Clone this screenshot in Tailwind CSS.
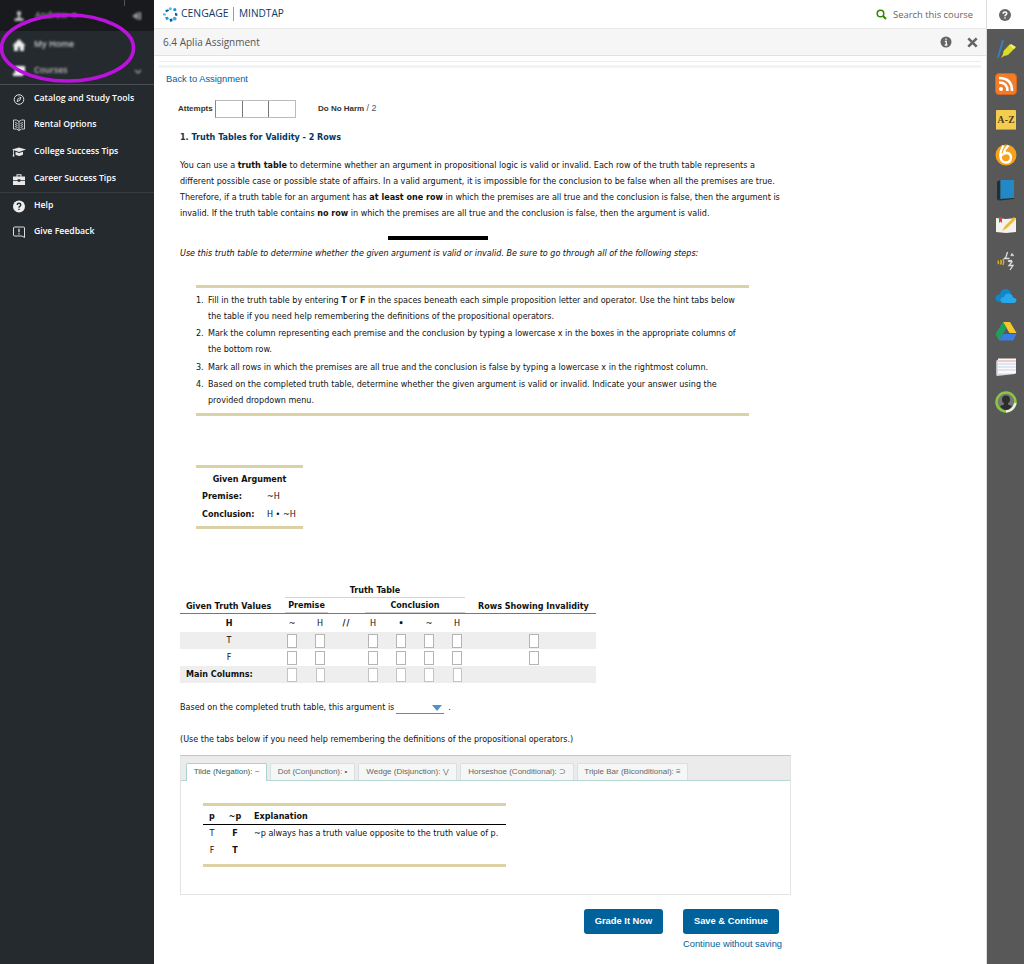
<!DOCTYPE html>
<html lang="en"><head><meta charset="utf-8"><title>6.4 Aplia Assignment</title>
<script src="https://cdn.jsdelivr.net/npm/@tailwindcss/browser@4"></script></head>
<body class="bg-white">
<div class="relative flex h-[964px] w-[1024px] overflow-hidden whitespace-nowrap">

<!-- Sidebar -->
<nav class="flex w-[154px] flex-none flex-col bg-[#252a2e] font-['Open_Sans',sans-serif] text-[8.7px] font-semibold text-white">
  <div class="flex h-[31px] items-center bg-[#181a1e] pt-px text-[#999]">
    <svg class="ml-[13px] h-3 w-3 blur-[1px]" viewBox="0 0 12 12" fill="#bbb"><circle cx="6" cy="3.200" r="2.200"/><path d="M5 5h2v2.500l3.500 1.200V11h-9V8.700L5 7.500z"/></svg>
    <span class="ml-[10px] w-[87px] blur-[1.200px]">Andrew &nbsp;▾</span>
    <svg class="ml-[10px] h-[10px] w-[10px] blur-[1px]" viewBox="0 0 10 10" fill="#999"><path d="M0 5l6-4v8zM7 1h2v8H7z"/></svg>
  </div>
  <div class="flex h-[27px] items-center">
    <svg class="ml-[13px] h-3 w-3 blur-[0.800px]" viewBox="0 0 12 12" fill="#eee"><path d="M6 0L12 6v1h-1v5H7V8H5v4H1V7H0V6z"/></svg>
    <span class="ml-[9px] text-[#ccc] blur-[0.900px]">My Home</span>
  </div>
  <div class="flex h-[27px] items-center border-b border-[#4b4f53]">
    <svg class="ml-[13px] h-3 w-3 blur-[0.800px]" viewBox="0 0 12 12" fill="#eee"><path d="M2 1h10v8H2zM0 8h10v3H0z"/></svg>
    <span class="ml-[9px] w-[100px] text-[#bbb] blur-[0.900px]">Courses</span>
    <svg class="h-[5px] w-[8px] blur-[0.800px]" viewBox="0 0 8 5" fill="none" stroke="#999" stroke-width="1.500"><path d="M1 1l3 3 3-3"/></svg>
  </div>
  <div class="flex h-[27px] items-center">
    <svg class="ml-[12px] h-[14px] w-[14px]" viewBox="0 0 14 14" fill="none" stroke="#e2e2e2"><circle cx="7" cy="7.500" r="4.800"/><path d="M9 5.300L6.200 6.600 5 9.600l2.800-1.300zM7 4.500v-.8" stroke-width=".9"/></svg>
    <span class="ml-[8px]">Catalog and Study Tools</span>
  </div>
  <div class="flex h-[26px] items-center">
    <svg class="ml-[12px] h-[14px] w-[14px]" viewBox="0 0 14 14" fill="none" stroke="#ddd" stroke-width=".9"><path d="M7 3.500L4.500 2H1.500v9h3L7 12.500 9.500 11h3V2h-3zM7 3.500v9M3 4.500l2.500 1M3 6.500l2.500 1M3 8.500l2.500 1M11 4.500l-2.500 1M11 6.500l-2.500 1M11 8.500l-2.500 1"/></svg>
    <span class="ml-[8px]">Rental Options</span>
  </div>
  <div class="flex h-[27px] items-center">
    <svg class="ml-[12px] h-[14px] w-[14px]" viewBox="0 0 14 14" fill="#e8e8e8"><path d="M7 2.500l7 2-7 2.400-5-1.600V9l.6 2.500H.5L1.200 9V5L0 4.500zM3.500 6.800L7 8l4-1.200v3Q7 12 3.500 9.800z"/></svg>
    <span class="ml-[8px]">College Success Tips</span>
  </div>
  <div class="flex h-[27px] items-center">
    <svg class="ml-[12px] h-[14px] w-[14px]" viewBox="0 0 14 14" fill="#e8e8e8"><path d="M1 4.500h3.500V2.300h5v2.200H13V8H8.300V7.300H5.700V8H1zM5.500 4.500h3V3.300h-3zM1 8.800h4.700v1h2.600v-1H13V13H1z" fill-rule="evenodd"/></svg>
    <span class="ml-[8px]">Career Success Tips</span>
  </div>
  <div class="flex h-[27px] items-center border-t border-[#383c40]">
    <svg class="ml-[12px] h-[14px] w-[14px]" viewBox="0 0 14 14"><circle cx="7" cy="7.500" r="6" fill="#eee"/><path d="M5.200 6Q5.200 4.300 7 4.300T8.800 6Q8.800 6.700 7.800 7.300 7 7.800 7 8.700M7 9.700v1.200" fill="none" stroke="#252a2e" stroke-width="1.400"/></svg>
    <span class="ml-[8px]">Help</span>
  </div>
  <div class="flex h-[26px] items-center">
    <svg class="ml-[12px] h-[14px] w-[14px]" viewBox="0 0 14 14" fill="none" stroke="#ddd"><path d="M2.500 2h9q1 0 1 1v9.500L10 11H2.500q-1 0-1-1V3q0-1 1-1z"/><path d="M7 3.800v3.500M7 8.300v1.300" stroke-width="1.300"/></svg>
    <span class="ml-[8px]">Give Feedback</span>
  </div>
</nav>

<!-- Main column -->
<main class="flex w-[833px] flex-none flex-col border-r border-[#ddd]">
  <header class="flex h-[29px] flex-none items-center border-b border-[#e8e8e8] pl-[9px] font-['Open_Sans',sans-serif]">
    <svg class="h-[15px] w-[15px]" viewBox="0 0 15 15"><circle cx="7.300" cy="1.700" r="1.500" fill="#53bfe8"/><circle cx="11.800" cy="2.700" r="1.600" fill="#1a9ad7"/><path d="M2.300 3.200l2.800-.9 1 1.400-3 1.600zM12 5.700l2.300.7v2.500L12 8.500z" fill="#0b5a8e"/><path d="M0 6.300l3 .4-.4 2L0 8.300z" fill="#53bfe8"/><path d="M2 10.200l2.800-.5 1.200 2-2.500 1.500z" fill="#1a9ad7"/><path d="M6.500 12l2.600-.4.500 2.600-2.600.5z" fill="#0b5a8e"/><circle cx="11.700" cy="11.700" r="1.900" fill="#35b0e5"/></svg>
    <span class="ml-[3px] w-[48px] text-[10.400px] text-[#0c3a66]">CENGAGE</span>
    <span class="ml-[4px] h-[14px] w-px bg-[#8ba0b3]"></span>
    <span class="ml-[5px] text-[10.100px] text-[#0c3a66]">MINDTAP</span>
    <svg class="ml-auto h-[11px] w-[11px]" viewBox="0 0 11 11" fill="none" stroke="#358600"><circle cx="4.500" cy="4.500" r="3.300" stroke-width="1.500"/><path d="M7 7l3 3" stroke-width="2"/></svg>
    <span class="mr-[13px] ml-[6px] pt-[2px] text-[9.400px] text-[#666]">Search this course</span>
  </header>
  <div class="flex h-[27px] flex-none items-center border-b border-[#e2e2e2] bg-[#f6f6f6] pl-[9px] font-['Open_Sans',sans-serif] text-[10px] text-[#555]">
    <span>6.4 Aplia Assignment</span>
    <svg class="ml-auto h-[12px] w-[12px]" viewBox="0 0 12 12"><circle cx="6" cy="6" r="5.500" fill="#666"/><path d="M6 2.500v1.600M4.800 5.400h1.500v3.200M4.700 9h2.800" fill="none" stroke="#f6f6f6" stroke-width="1.300"/></svg>
    <svg class="mr-[8px] ml-[15px] h-[11px] w-[11px]" viewBox="0 0 11 11" stroke="#666" stroke-width="2.600"><path d="M1.300 1.300l8.400 8.400M9.700 1.300l-8.400 8.400"/></svg>
  </div>
  <div class="mt-[5px] mr-[5px] ml-[5px] h-px flex-none bg-[#ececec]"></div>
  <div class="mt-[3px] mr-[5px] ml-[5px] h-[3px] flex-none bg-[#f1f4f4]"></div>

  <div class="flex flex-none flex-col pl-[26px] font-['DejaVu_Sans',Verdana,sans-serif] text-[8.050px] text-[#111]">
    <a class="-ml-[14px] mt-[4px] h-[14px] font-['Liberation_Sans',Arial,sans-serif] text-[9.330px] leading-[14px] text-[#00629b]">Back to Assignment</a>
    <div class="mt-[14px] flex h-[18px] items-center font-['Liberation_Sans',Arial,sans-serif] text-[8px] text-[#333]">
      <b class="-ml-[2px] w-[37px] pb-px">Attempts</b>
      <div class="flex h-[18px] w-[81px] divide-x divide-[#777] border border-[#bbb] border-l-[#888]"><span class="w-[27px]"></span><span class="w-[26px]"></span><span class="w-[26px]"></span></div>
      <span class="ml-[22px] pb-px"><b>Do No Harm</b> <span class="text-[9px] text-[#555]">/ 2</span></span>
    </div>
    <h1 class="mt-[12px] h-[16px] font-bold leading-[16px] text-[#003865]">1. Truth Tables for Validity - 2 Rows</h1>
    <p class="mt-[12px] leading-[16px]">You can use a <b>truth table</b> to determine whether an argument in propositional logic is valid or invalid. Each row of the truth table represents a<br>different possible case or possible state of affairs. In a valid argument, it is impossible for the conclusion to be false when all the premises are true.<br>Therefore, if a truth table for an argument has <b>at least one row</b> in which the premises are all true and the conclusion is false, then the argument is<br>invalid. If the truth table contains <b>no row</b> in which the premises are all true and the conclusion is false, then the argument is valid.</p>
    <div class="mt-[14px] ml-[208px] h-[4px] w-[100px] bg-black"></div>
    <p class="mt-[6px] leading-[16px] italic">Use this truth table to determine whether the given argument is valid or invalid. Be sure to go through all of the following steps:</p>

    <ol class="mt-[23px] ml-[16px] h-[131px] w-[553px] border-y-[3px] border-[#dcd1a4] pt-[5px] leading-[16px]">
      <li class="flex h-[33px]"><span class="w-[12px]">1.</span><span>Fill in the truth table by entering <b>T</b> or <b>F</b> in the spaces beneath each simple proposition letter and operator. Use the hint tabs below<br>the table if you need help remembering the definitions of the propositional operators.</span></li>
      <li class="flex h-[34px]"><span class="w-[12px]">2.</span><span class="tracking-[-0.008px]">Mark the column representing each premise and the conclusion by typing a lowercase x in the boxes in the appropriate columns of<br>the bottom row.</span></li>
      <li class="flex h-[17px]"><span class="w-[12px]">3.</span><span>Mark all rows in which the premises are all true and the conclusion is false by typing a lowercase x in the rightmost column.</span></li>
      <li class="flex"><span class="w-[12px]">4.</span><span>Based on the completed truth table, determine whether the given argument is valid or invalid. Indicate your answer using the<br>provided dropdown menu.</span></li>
    </ol>

    <div class="mt-[49px] ml-[16px] h-[64px] w-[107px] border-y-[3px] border-[#dcd1a4] pt-[3px] leading-[17px]">
      <div class="text-center font-bold h-[17px]">Given Argument</div>
      <div class="flex pl-[6px]"><b class="w-[65px]">Premise:</b><span>~H</span></div>
      <div class="flex pl-[6px] pt-px"><b class="w-[65px]">Conclusion:</b><span>H • ~H</span></div>
    </div>

    <!-- Truth table -->
    <div class="mt-[53px] w-[416px] leading-[14px]">
      <div class="ml-[105px] h-[16px] w-[180px] border-b border-[#d4d4d4] pt-[2px] text-center font-bold leading-[13px]">Truth Table</div>
      <div class="flex h-[16px] border-b border-[#777] font-bold">
        <span class="w-[105px] pt-[2px] pl-[6px]">Given Truth Values</span>
        <span class="h-[15px] w-[43px] border-b border-[#ccc] pt-px text-center">Premise</span>
        <span class="ml-[37px] h-[15px] w-[100px] border-b border-[#ccc] pt-px text-center">Conclusion</span>
        <span class="ml-[13px] pt-[2px]">Rows Showing Invalidity</span>
      </div>
      <div class="grid h-[18px] grid-cols-[98px_28px_28px_25px_28px_28px_28px_28px_125px] items-center pt-[2px] text-center">
        <b>H</b><span>~</span><span>H</span><b class="tracking-[1px]">//</b><span>H</span><b>•</b><span>~</span><span>H</span><span></span>
      </div>
      <div class="grid h-[17px] grid-cols-[98px_28px_28px_25px_28px_28px_28px_28px_125px] items-center justify-items-center bg-[#eee]">
        <span>T</span><i class="h-[14px] w-[10px] border border-[#b4b4b4] bg-white"></i><i class="h-[14px] w-[10px] border border-[#b4b4b4] bg-white"></i><span></span><i class="h-[14px] w-[10px] border border-[#b4b4b4] bg-white"></i><i class="h-[14px] w-[10px] border border-[#b4b4b4] bg-white"></i><i class="h-[14px] w-[10px] border border-[#b4b4b4] bg-white"></i><i class="h-[14px] w-[10px] border border-[#b4b4b4] bg-white"></i><i class="h-[14px] w-[10px] border border-[#b4b4b4] bg-white"></i>
      </div>
      <div class="grid h-[17px] grid-cols-[98px_28px_28px_25px_28px_28px_28px_28px_125px] items-center justify-items-center">
        <span class="pt-px">F</span><i class="h-[14px] w-[10px] border border-[#b4b4b4] bg-white"></i><i class="h-[14px] w-[10px] border border-[#b4b4b4] bg-white"></i><span></span><i class="h-[14px] w-[10px] border border-[#b4b4b4] bg-white"></i><i class="h-[14px] w-[10px] border border-[#b4b4b4] bg-white"></i><i class="h-[14px] w-[10px] border border-[#b4b4b4] bg-white"></i><i class="h-[14px] w-[10px] border border-[#b4b4b4] bg-white"></i><i class="h-[14px] w-[10px] border border-[#b4b4b4] bg-white"></i>
      </div>
      <div class="grid h-[17px] grid-cols-[98px_28px_28px_25px_28px_28px_28px_28px_125px] items-center justify-items-center bg-[#eee]">
        <b class="justify-self-start pl-[6px]">Main Columns:</b><i class="h-[14px] w-[10px] border border-[#c4c4c4] bg-white"></i><i class="h-[14px] w-[9px] border border-[#c4c4c4] bg-white"></i><span></span><i class="h-[14px] w-[10px] border border-[#c4c4c4] bg-white"></i><i class="h-[14px] w-[10px] border border-[#c4c4c4] bg-white"></i><i class="h-[14px] w-[10px] border border-[#c4c4c4] bg-white"></i><i class="h-[14px] w-[9px] border border-[#c4c4c4] bg-white"></i>
      </div>
    </div>

    <div class="mt-[17px] flex h-[16px] leading-[16px]">
      <span>Based on the completed truth table, this argument is</span>
      <span class="ml-[2px] flex h-[14px] w-[48px] justify-end border-b border-[#4a90cf] pr-[2px]"><svg class="mt-[5px] h-[6px] w-[10px]" viewBox="0 0 10 6" fill="#4f94d0"><path d="M0 0h10L5 6z"/></svg></span>
      <span class="ml-[4px]">.</span>
    </div>
    <p class="mt-[16px] leading-[16px]">(Use the tabs below if you need help remembering the definitions of the propositional operators.)</p>

    <!-- Operator help tabs -->
    <section class="mt-[7px] h-[140px] w-[611px] border border-[#e4e4e4] border-t-[#c4c4c4]">
      <div class="flex h-[25px] items-end gap-[3px] border-b border-[#b5d6d4] bg-[#ebebeb] pl-[5px] font-['Liberation_Sans',Arial,sans-serif] text-[8px] text-[#666]">
        <span class="-mb-px h-[18px] w-[81px] rounded-t-[2px] border border-b-0 border-[#a9d4d2] bg-white text-center leading-[15px] text-[#28645f]">Tilde (Negation): ~</span>
        <span class="h-[17px] w-[85px] rounded-t-[2px] border border-b-0 border-[#dcdfdf] bg-[#f5f7f7] text-center leading-[15px]">Dot (Conjunction): •</span>
        <span class="h-[17px] w-[99px] rounded-t-[2px] border border-b-0 border-[#dcdfdf] bg-[#f5f7f7] text-center leading-[15px]">Wedge (Disjunction): <span class="text-[7px]">⋁</span></span>
        <span class="h-[17px] w-[114px] rounded-t-[2px] border border-b-0 border-[#dcdfdf] bg-[#f5f7f7] text-center leading-[15px]">Horseshoe (Conditional): <span class="font-['DejaVu_Sans']">⊃</span></span>
        <span class="h-[17px] w-[111px] rounded-t-[2px] border border-b-0 border-[#dcdfdf] bg-[#f5f7f7] text-center leading-[15px]">Triple Bar (Biconditional): ≡</span>
      </div>
      <div class="mt-[22px] ml-[22px] h-[64px] w-[303px] border-y-[3px] border-[#dcd1a4] pt-px leading-[17px]">
        <div class="flex h-[18px] border-b border-black pt-px font-bold"><span class="w-[18px] text-center">p</span><span class="ml-[5px] w-[18px] text-center">~p</span><span class="ml-[10px]">Explanation</span></div>
        <div class="flex"><span class="w-[18px] text-center">T</span><b class="ml-[5px] w-[18px] text-center">F</b><span class="ml-[10px]">~p always has a truth value opposite to the truth value of p.</span></div>
        <div class="flex"><span class="w-[18px] text-center">F</span><b class="ml-[5px] w-[18px] text-center">T</b></div>
      </div>
    </section>

    <div class="mt-[14px] ml-[404px] flex items-start gap-[20px] font-['Liberation_Sans',Arial,sans-serif] text-[9.330px]">
      <button class="h-[25px] w-[79px] rounded-[3px] bg-[#00629b] font-bold text-white">Grade It Now</button>
      <div class="flex flex-col">
        <button class="h-[25px] w-[96px] rounded-[3px] bg-[#00629b] font-bold text-white">Save &amp; Continue</button>
        <a class="mt-[3px] leading-[14px] text-[#00629b]">Continue without saving</a>
      </div>
    </div>
  </div>
</main>

<!-- App dock -->
<aside class="flex flex-1 flex-col items-center bg-[#585858]">
  <div class="flex h-[29px] w-full flex-none items-center justify-center bg-white"><svg class="mr-px h-[12px] w-[12px]" viewBox="0 0 12 12"><circle cx="6" cy="6" r="6" fill="#666"/><path d="M4.200 4.700Q4.200 3 6 3T7.800 4.600Q7.800 5.300 6.800 5.900 6 6.400 6 7.200M6 8.200v1.300" fill="none" stroke="#fff" stroke-width="1.500"/></svg></div>
  <div class="mt-[9px] flex flex-col gap-[13.300px]">
    <svg class="h-[22px] w-[22px]" viewBox="0 0 22 22"><path d="M7 2l2 .5L4 19l-1.500 2L2.500 18z" fill="#3b7fc0"/><path d="M15 6l5 4-7 7-4 1-3 2 2-4 .5-3z" fill="#d8dc2a"/><path d="M16 6l5 3-2 2-4-3z" fill="#f2f078"/></svg>
    <svg class="h-[22px] w-[22px]" viewBox="0 0 22 22"><rect x=".5" y=".5" width="21" height="21" rx="3.500" fill="#f07d2b" stroke="#d9641a"/><circle cx="6" cy="16" r="2" fill="#fff"/><path d="M4 9.500q8.500 0 8.500 8.500M4 5q13 0 13 13" fill="none" stroke="#fff" stroke-width="2.600"/></svg>
    <svg class="h-[22px] w-[22px]" viewBox="0 0 22 22"><rect x="1" y="1" width="20" height="20" rx="1" fill="#f4cc50"/><path d="M1 20h20v1H1z" fill="#c99a22"/><text x="11" y="14" text-anchor="middle" font-family="Liberation Serif" font-weight="bold" font-size="9.500" fill="#4a3e1c" textLength="17">A-Z</text></svg>
    <svg class="h-[22px] w-[22px]" viewBox="0 0 22 22"><circle cx="11" cy="11" r="10.500" fill="#f7a11a"/><path d="M8.500 1.500Q4.500 8 5.500 13.500q1 5 5.500 5t5-4.500q0-4.500-4-5Q8.500 8.700 6 12M13.500 1.500Q9.500 5 9 9" fill="none" stroke="#fff" stroke-width="2.300"/></svg>
    <svg class="h-[22px] w-[22px]" viewBox="0 0 22 22"><path d="M2 2.500L5.500 1v19L2 21z" fill="#1c3038"/><path d="M5.500 1H19v18L5.500 20z" fill="#2388c6"/><path d="M2 21l3.500-1L19 19v1L5 21.500z" fill="#22323a"/></svg>
    <svg class="h-[22px] w-[22px]" viewBox="0 0 22 22"><path d="M1 4l10 1 10-1v14l-10 1-10-1z" fill="#f2f2ee"/><path d="M4 3h3v6L5.500 7.500 4 9z" fill="#d4472a"/><path d="M19 3l2 2-9 9-5 3 3-5z" fill="#f2b928"/></svg>
    <svg class="h-[22px] w-[22px]" viewBox="0 0 22 22" fill="none"><path d="M12.500 2l-1.500 5-1.500 1.500h5M16 6l1-2 1.500 2M17 10.500l-4 .5 4 1-3 3.500h4l-3 4.500" stroke="#ddd" stroke-width="1.300"/><path d="M8 9q1.500 3 0 6M5.500 10q1.500 2 0 4.500M3 10.500q1 2 0 3.500" stroke="#d9b21b" stroke-width="1.500"/></svg>
    <svg class="h-[22px] w-[22px]" viewBox="0 0 22 22"><path d="M4 17q-4-1-3.500-4.500Q1.500 9 5 9.500 6 4 10.500 4q4 0 5.500 4z" fill="#1187c9"/><path d="M8 18q-3-.5-2.500-3.500Q6 12 9 12q1.500-4 5-3.500 3.500.5 4 4 3.500.5 3.500 3-.5 2.500-3 2.500z" fill="#28a8e8"/></svg>
    <svg class="h-[22px] w-[22px]" viewBox="0 0 22 22"><path d="M8 2h7l6.500 11h-7z" fill="#f9c72c"/><path d="M8 2l3.500 6L4 20.500.5 14z" fill="#1fa05e"/><path d="M8 14h13.500L18 20.500H4z" fill="#3c7de0"/></svg>
    <svg class="h-[22px] w-[22px]" viewBox="0 0 22 22"><path d="M1 5l3-2v14l-3 3z" fill="#bbb"/><path d="M2 4l18-1v15l-18 2z" fill="#d8d8d8"/><path d="M3 2.500h18v15H3z" fill="#fafafa"/><path d="M3 5h18" stroke="#e89a9a"/><path d="M3 8h18M3 11h18M3 14h18" stroke="#c2d4e8"/></svg>
    <svg class="h-[22px] w-[22px]" viewBox="0 0 22 22"><circle cx="11" cy="11" r="9.500" fill="#777" stroke="#8cc63f" stroke-width="2.500"/><path d="M11 20.500Q18 20 20.500 12" fill="none" stroke="#eee" stroke-width="2.500"/><circle cx="11" cy="8.500" r="4" fill="#2d2d2d"/><path d="M9 11h4v2.500l4 1.500q-2.500 4-6 4t-6-4l4-1.500z" fill="#2d2d2d"/></svg>
  </div>
</aside>

<!-- Hand-drawn highlight around the first links -->
<svg class="absolute top-0 left-0 h-[90px] w-[140px]" viewBox="0 0 140 90" fill="none"><ellipse cx="67.500" cy="48" rx="66" ry="33" stroke="#bb12dd" stroke-width="3.600"/></svg>
<span class="absolute top-0 left-[124px] h-[6px] w-px bg-[#555]"></span>
</div>
</body></html>
